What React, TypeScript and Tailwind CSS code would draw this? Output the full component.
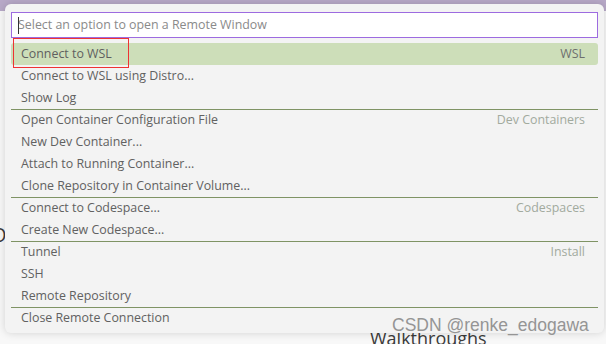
import React from "react";

type Item = {
  label: string;
  detail?: string;
  sep?: boolean;
  active?: boolean;
};

const items: Item[] = [
  { label: "Connect to WSL", detail: "WSL", active: true },
  { label: "Connect to WSL using Distro..." },
  { label: "Show Log" },
  { label: "Open Container Configuration File", detail: "Dev Containers", sep: true },
  { label: "New Dev Container..." },
  { label: "Attach to Running Container..." },
  { label: "Clone Repository in Container Volume..." },
  { label: "Connect to Codespace...", detail: "Codespaces", sep: true },
  { label: "Create New Codespace..." },
  { label: "Tunnel", detail: "Install", sep: true },
  { label: "SSH" },
  { label: "Remote Repository" },
  { label: "Close Remote Connection", sep: true },
];

const App = () => {
  return (
    <div className="relative h-[344px] w-[606px] overflow-hidden bg-[#f8f8f8] font-['Open_Sans',sans-serif]">
      {/* page behind the picker */}
      <div className="h-[11px] bg-[#b8a9c8]" />
      <div className="flex h-[333px] flex-col justify-between pt-[214px] text-[#3b3b3b]">
        <span className="-ml-[9px] text-[20px] leading-none">O</span>
        <span className="-mb-[3px] pl-[370px] text-[18px] leading-none">Walkthroughs</span>
      </div>

      {/* quick pick */}
      <div className="absolute left-[5px] top-[4px] w-[599px] rounded-[6px] bg-[#f3f3f3] px-[6px] pt-[8px] pb-[4px] shadow-[0_0_8px_rgba(0,0,0,0.16)]">
        <div className="relative flex h-[26px] items-center border border-[#9d6be0] bg-white pl-[6px] text-[12.4px] text-[#8a8a8a]">
          <span className="absolute left-[6px] top-[4px] h-[17px] w-px bg-[#333]" />
          Select an option to open a Remote Window
        </div>

        <div className="mt-[5px] text-[12.4px]">
          {items.map((it) => (
            <div
              key={it.label}
              className={
                "relative flex h-[22px] items-center justify-between pl-[10px] pr-[13px] " +
                (it.sep ? "border-t border-[#7f9364] " : "") +
                (it.active ? "rounded-[3px] bg-[#cddeb9] text-[#5f5f5f]" : "text-[#616161]")
              }
            >
              <span>{it.label}</span>
              {it.detail && (
                <span className={it.active ? "text-[#6e6e6e]" : "text-[#a2aa9e]"}>{it.detail}</span>
              )}
              {it.active && (
                <div className="absolute left-[2px] top-[-5px] h-[30px] w-[116px] border border-[#ee3333]" />
              )}
            </div>
          ))}
        </div>
      </div>

      {/* watermark */}
      <span className="absolute left-[392px] top-[312px] text-[17.5px] text-[#959595] font-['Liberation_Sans',sans-serif]">
        CSDN @renke_edogawa
      </span>
    </div>
  );
};

export default App;
